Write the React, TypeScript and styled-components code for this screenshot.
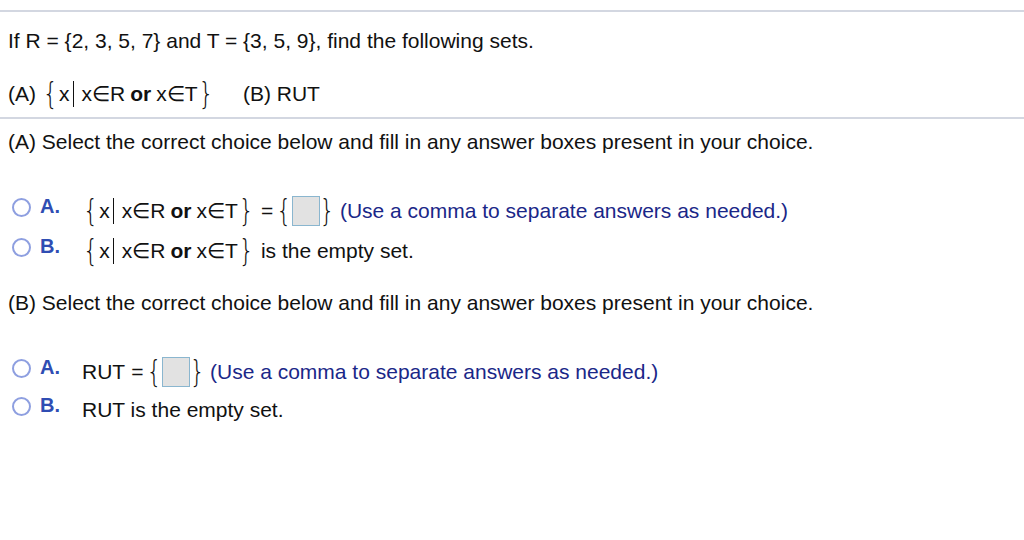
import React from 'react';
import styled, { createGlobalStyle } from 'styled-components';

const GlobalStyle = createGlobalStyle`
  html, body {
    margin: 0;
    padding: 0;
    background: #ffffff;
  }
  body {
    font-family: "Liberation Sans", Arial, sans-serif;
    color: #111111;
  }
`;

const Page = styled.div`
  width: 1024px;
  height: 540px;
  padding-top: 10px;
  box-sizing: border-box;
  overflow: hidden;
  font-size: 21px;
`;

const Rule = styled.div`
  height: 2px;
  background: #d3d7e1;
`;

const Line = styled.div<{ $h: number; $mt?: number }>`
  display: flex;
  align-items: center;
  height: ${(p) => p.$h}px;
  margin-top: ${(p) => p.$mt ?? 0}px;
  padding-left: 8px;
  white-space: nowrap;
`;

const OptionRow = styled.div<{ $h: number; $mt?: number }>`
  display: flex;
  align-items: center;
  height: ${(p) => p.$h}px;
  margin-top: ${(p) => p.$mt ?? 0}px;
  padding-left: 12px;
  white-space: nowrap;
`;

const Radio = styled.span`
  width: 15px;
  height: 15px;
  border: 2px solid #8e9fe0;
  border-radius: 50%;
  box-sizing: content-box;
  margin-right: 9px;
  margin-top: -8px;
`;

const Letter = styled.span`
  width: 42px;
  font-weight: bold;
  font-size: 20px;
  color: #2f4db3;
  margin-top: -10px;
`;

const Brace = styled.span<{ $tight?: boolean }>`
  display: inline-block;
  font-family: "DejaVu Sans", sans-serif;
  font-weight: 200;
  font-size: 24px;
  transform: scaleY(1.25);
  line-height: 1;
  margin: 0 ${(p) => (p.$tight ? -1 : 1)}px;
`;

const Bold = styled.b`
  font-weight: bold;
  margin: 0 5px;
`;

const Gap = styled.span<{ $w: number }>`
  display: inline-block;
  width: ${(p) => p.$w}px;
`;

const Equals = styled.span`
  margin: 0 4px 0 6px;
`;

const AnswerBox = styled.span`
  display: inline-block;
  width: 26px;
  height: 28px;
  background: #e2e2e2;
  border: 1px solid #8ab6cf;
  margin: 0 1px;
`;

const Hint = styled.span`
  color: #1a2788;
  margin-left: 6px;
`;

const Bar = styled.span`
  display: inline-block;
  width: 1px;
  height: 26px;
  background: #111;
  margin: 0 8px 0 3px;
`;

function SetBuilder() {
  return (
    <>
      <Brace>{'{'}</Brace>x<Bar />x∈R<Bold>or</Bold>x∈T<Brace>{'}'}</Brace>
    </>
  );
}

function Answer() {
  return (
    <>
      <Equals>=</Equals>
      <Brace $tight>{'{'}</Brace>
      <AnswerBox />
      <Brace $tight>{'}'}</Brace>
      <Hint>(Use a comma to separate answers as needed.)</Hint>
    </>
  );
}

export default function App() {
  return (
    <Page>
      <GlobalStyle />
      <Rule />
      <Line $h={58}>If R = {'{'}2, 3, 5, 7{'}'} and T = {'{'}3, 5, 9{'}'}, find the following sets.</Line>
      <Line $h={47}>
        (A)&nbsp;
        <SetBuilder />
        <Gap $w={28} />
        (B) RUT
      </Line>
      <Rule />
      <Line $h={46}>(A) Select the correct choice below and fill in any answer boxes present in your choice.</Line>
      <OptionRow $h={40} $mt={26}>
        <Radio />
        <Letter>A.</Letter>
        <SetBuilder />
        <Answer />
      </OptionRow>
      <OptionRow $h={40}>
        <Radio />
        <Letter>B.</Letter>
        <SetBuilder />
        &nbsp;is the empty set.
      </OptionRow>
      <Line $h={46} $mt={9}>(B) Select the correct choice below and fill in any answer boxes present in your choice.</Line>
      <OptionRow $h={40} $mt={26}>
        <Radio />
        <Letter>A.</Letter>
        RUT
        <Answer />
      </OptionRow>
      <OptionRow $h={36}>
        <Radio />
        <Letter>B.</Letter>
        RUT is the empty set.
      </OptionRow>
    </Page>
  );
}
